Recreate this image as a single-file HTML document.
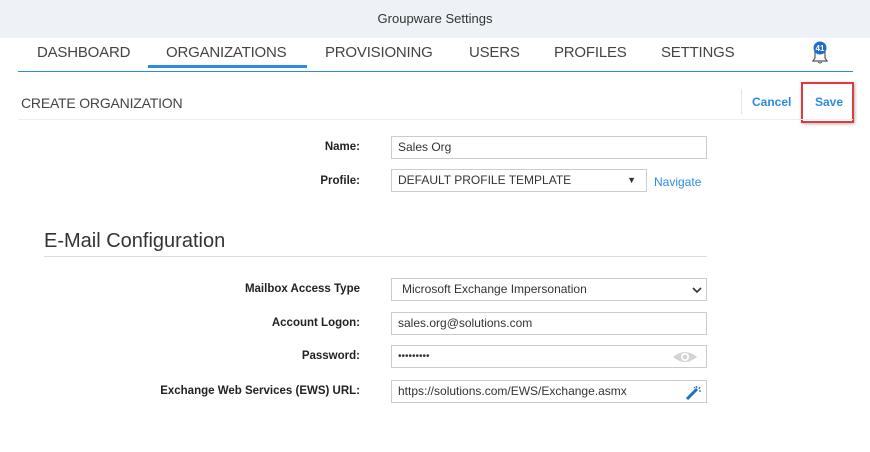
<!DOCTYPE html>
<html><head><style>
*{box-sizing:border-box;margin:0;padding:0}
body{width:870px;height:452px;background:#fff;font-family:"Liberation Sans",Arial,sans-serif;position:relative;overflow:hidden;color:#333}
.a{position:absolute}
.top{left:0;top:0;width:870px;height:38px;background:#eef2f6;text-align:center;line-height:37px;font-size:13px;color:#333}
.nav{top:44px;font-size:15px;color:#444;letter-spacing:-0.2px}
.lbl{font-size:11.5px;font-weight:bold;color:#222;text-align:right;width:300px;white-space:nowrap}
.in{border:1px solid #ccc;height:23px;font-size:12px;line-height:21px;padding-left:6px;color:#333;background:#fff}
</style></head><body>
<div class="a top">Groupware Settings</div>
<div class="a nav" style="left:37px">DASHBOARD</div>
<div class="a nav" style="left:166px">ORGANIZATIONS</div>
<div class="a nav" style="left:325px">PROVISIONING</div>
<div class="a nav" style="left:469px">USERS</div>
<div class="a nav" style="left:554px">PROFILES</div>
<div class="a nav" style="left:661px">SETTINGS</div>
<div class="a" style="left:148px;top:65px;width:159px;height:3px;background:#2b8ae6"></div>
<div class="a" style="left:18px;top:71px;width:835px;height:1px;background:#2b8ae6"></div>
<svg class="a" style="left:808px;top:40px" width="24" height="26" viewBox="0 0 24 26"><path d="M5 21 L7 18 L7 12 Q7 7 12 7 Q17 7 17 12 L17 18 L19 21 Z" fill="none" stroke="#555" stroke-width="1.2"/><path d="M10 22 Q12 24 14 22" stroke="#555" fill="none"/><circle cx="12" cy="8" r="6.5" fill="#1f6fc4"/><text x="12" y="11" font-size="8" font-weight="bold" fill="#fff" text-anchor="middle" font-family="Liberation Sans">41</text></svg>
<div class="a" style="left:21px;top:95px;font-size:14px;color:#444;letter-spacing:-0.2px">CREATE ORGANIZATION</div>
<div class="a" style="left:741px;top:89px;width:1px;height:26px;background:#e4e4e4"></div>
<div class="a" style="left:752px;top:95px;font-size:12px;font-weight:bold;color:#2b8ae6">Cancel</div>
<div class="a" style="left:815px;top:95px;font-size:12px;font-weight:bold;color:#2b8ae6">Save</div>
<div class="a" style="left:801px;top:82px;width:53px;height:41px;border:2px solid #e0393e;box-shadow:1px 1px 3px rgba(0,0,0,.3)"></div>
<div class="a" style="left:18px;top:119px;width:835px;height:1px;background:#eee"></div>

<div class="a lbl" style="left:60px;top:141px">Name:</div>
<div class="a in" style="left:391px;top:136px;width:316px">Sales Org</div>
<div class="a lbl" style="left:60px;top:175px">Profile:</div>
<div class="a in" style="left:391px;top:169px;width:256px">DEFAULT PROFILE TEMPLATE<span style="position:absolute;right:10px;top:0;font-size:9px">▼</span></div>
<div class="a" style="left:654px;top:175px;font-size:12px;color:#2b8ae6">Navigate</div>

<div class="a" style="left:44px;top:230px;font-size:20px;color:#333">E-Mail Configuration</div>
<div class="a" style="left:44px;top:256px;width:663px;height:1px;background:#ddd"></div>

<div class="a lbl" style="left:60px;top:283px">Mailbox Access Type</div>
<div class="a in" style="left:391px;top:278px;width:316px;padding-left:10px">Microsoft Exchange Impersonation<svg style="position:absolute;right:4px;top:7px" width="10" height="8"><path d="M1 2 L5 6 L9 2" stroke="#333" stroke-width="1.6" fill="none"/></svg></div>
<div class="a lbl" style="left:60px;top:317px">Account Logon:</div>
<div class="a in" style="left:391px;top:312px;width:316px">sales.org@solutions.com</div>
<div class="a lbl" style="left:60px;top:350px">Password:</div>
<div class="a in" style="left:391px;top:345px;width:316px;font-size:10px">•••••••••<svg style="position:absolute;right:8px;top:5px" width="26" height="12"><path d="M1 6 Q13 -4 25 6 Q13 16 1 6 Z" fill="#d4d4d4"/><circle cx="13" cy="6" r="4" fill="#fff"/><circle cx="13" cy="6" r="2.3" fill="#d4d4d4"/></svg></div>
<div class="a lbl" style="left:60px;top:385px">Exchange Web Services (EWS) URL:</div>
<div class="a in" style="left:391px;top:380px;width:316px">https://solutions.com/EWS/Exchange.asmx<svg style="position:absolute;right:3px;top:3px" width="18" height="16"><path d="M2 15 L12 5" stroke="#1f6fc4" stroke-width="3"/><path d="M11 2 L12 4 M15 3 L14 5 M16 7 L14 7 M9 3 L10 4" stroke="#1f6fc4" stroke-width="1.2"/></svg></div>
</body></html>
